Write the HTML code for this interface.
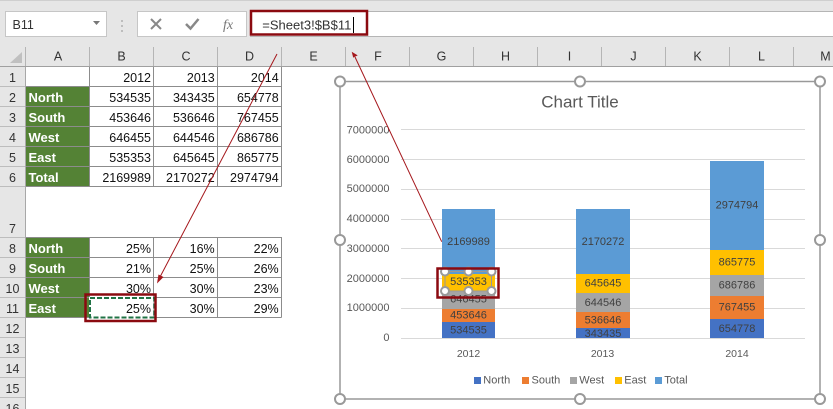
<!DOCTYPE html>
<html><head><meta charset="utf-8"><style>
html,body{margin:0;padding:0;background:#fff;width:833px;height:409px;overflow:hidden}
svg{display:block}
text{font-family:"Liberation Sans",sans-serif}
.c text{font-size:12.5px;fill:#111;text-anchor:end}
.h text{font-size:12.5px;fill:#333;text-anchor:middle}
.g text{font-size:13px;font-weight:bold;fill:#fff}
.a text{font-size:11px;fill:#595959;text-anchor:end}
.d text{font-size:11px;fill:#404040;text-anchor:middle}
.x text{font-size:10.5px;fill:#595959;text-anchor:middle}
.l text{font-size:11px;fill:#595959}
.hd circle{fill:#fff;stroke:#999;stroke-width:2}
</style></head><body>
<svg width="833" height="409" viewBox="0 0 833 409" xmlns="http://www.w3.org/2000/svg">
<rect width="833" height="409" fill="#fff"/>
<!-- top bars -->
<rect width="833" height="66" fill="#e6e6e6"/>
<rect width="833" height="1" fill="#cfcfcf"/>
<rect x="250" y="12" width="583" height="24" fill="#fff"/>
<rect x="250" y="11" width="583" height="1" fill="#b5b5b5"/>
<rect x="250" y="36" width="583" height="1" fill="#b5b5b5"/>
<rect x="5.5" y="11.5" width="101" height="25" fill="#fff" stroke="#c6c6c6"/>
<text x="12.5" y="29" font-size="12.5" fill="#333">B11</text>
<path d="M93 21h7l-3.500 4z" fill="#777"/>
<g fill="#bdbdbd"><rect x="121" y="20" width="2" height="2"/><rect x="121" y="25" width="2" height="2"/><rect x="121" y="30" width="2" height="2"/></g>
<rect x="137.500" y="11.500" width="109" height="25" fill="#fff" stroke="#c6c6c6"/>
<path d="M151 19l10 10M161 19l-10 10" stroke="#888" stroke-width="2" fill="none"/>
<path d="M186 24l4.500 4.500L198.500 19" stroke="#888" stroke-width="2.500" fill="none"/>
<text x="223" y="29" font-family="Liberation Serif" font-style="italic" font-size="14" fill="#777" style="font-family:'Liberation Serif',serif">fx</text>
<text x="262.300" y="29.300" font-size="13" fill="#333">=Sheet3!$B$11</text>
<rect x="353" y="17" width="1" height="16" fill="#000"/>
<rect x="251" y="11" width="116" height="23.500" fill="none" stroke="#8b0a10" stroke-width="2.500"/>

<!-- column headers -->
<path d="M25.500 47v19M89.500 47v19M153.500 47v19M217.500 47v19M281.500 47v19M345.500 47v19M409.500 47v19M473.500 47v19M537.500 47v19M601.500 47v19M665.500 47v19M729.500 47v19M793.500 47v19" stroke="#b5b5b5"/>
<rect y="66" width="833" height="1" fill="#a0a0a0"/>
<path d="M22 52v11H10z" fill="#c0c0c0"/>
<g class="h">
<text x="58" y="60.700">A</text><text x="121.500" y="60.700">B</text><text x="186" y="60.700">C</text><text x="249.500" y="60.700">D</text><text x="313.500" y="60.700">E</text><text x="378" y="60.700">F</text><text x="441.500" y="60.700">G</text><text x="505.500" y="60.700">H</text><text x="569.500" y="60.700">I</text><text x="633.500" y="60.700">J</text><text x="697.500" y="60.700">K</text><text x="761.500" y="60.700">L</text><text x="825.500" y="60.700">M</text>
</g>
<!-- row headers -->
<rect y="67" width="25.500" height="342" fill="#e6e6e6"/>
<rect x="25" y="67" width="1" height="342" fill="#a8a8a8"/>
<path d="M0 86.500h25M0 106.500h25M0 126.500h25M0 146.500h25M0 166.500h25M0 186.500h25M0 237.500h25M0 257.500h25M0 277.500h25M0 297.500h25M0 317.500h25M0 337.500h25M0 357.500h25M0 377.500h25M0 397.500h25" stroke="#bdbdbd"/>
<g class="h">
<text x="12.500" y="82">1</text><text x="12.500" y="102">2</text><text x="12.500" y="122">3</text><text x="12.500" y="142">4</text><text x="12.500" y="162">5</text><text x="12.500" y="182">6</text><text x="12.500" y="233">7</text><text x="12.500" y="253">8</text><text x="12.500" y="273">9</text><text x="12.500" y="293">10</text><text x="12.500" y="313">11</text><text x="12.500" y="333">12</text><text x="12.500" y="353">13</text><text x="12.500" y="373">14</text><text x="12.500" y="393">15</text><text x="12.500" y="413">16</text>
</g>
<!-- green cells -->
<g fill="#548235"><rect x="26" y="87" width="63" height="99"/><rect x="26" y="238" width="63" height="79"/></g>
<!-- grid -->
<path d="M89.500 67v119.500M153.500 67v119.500M217.500 67v119.500M281.500 67v119.500M89.500 237v80.500M153.500 237v80.500M217.500 237v80.500M281.500 237v80.500M26 86.500h255.500M26 106.500h255.500M26 126.500h255.500M26 146.500h255.500M26 166.500h255.500M26 186.500h255.500M26 237.500h255.500M26 257.500h255.500M26 277.500h255.500M26 297.500h255.500M26 317.500h255.500" stroke="#8c8c8c" fill="none"/>
<g class="g">
<text x="28.500" y="102">North</text><text x="28.500" y="122">South</text><text x="28.500" y="142">West</text><text x="28.500" y="162">East</text><text x="28.500" y="182">Total</text>
<text x="28.500" y="253">North</text><text x="28.500" y="273">South</text><text x="28.500" y="293">West</text><text x="28.500" y="313">East</text>
</g>
<g class="c">
<text x="151" y="82">2012</text><text x="214.700" y="82">2013</text><text x="278.700" y="82">2014</text>
<text x="151" y="102">534535</text><text x="214.700" y="102">343435</text><text x="278.700" y="102">654778</text>
<text x="151" y="122">453646</text><text x="214.700" y="122">536646</text><text x="278.700" y="122">767455</text>
<text x="151" y="142">646455</text><text x="214.700" y="142">644546</text><text x="278.700" y="142">686786</text>
<text x="151" y="162">535353</text><text x="214.700" y="162">645645</text><text x="278.700" y="162">865775</text>
<text x="151" y="182">2169989</text><text x="214.700" y="182">2170272</text><text x="278.700" y="182">2974794</text>
<text x="151" y="253">25%</text><text x="214.700" y="253">16%</text><text x="278.700" y="253">22%</text>
<text x="151" y="273">21%</text><text x="214.700" y="273">25%</text><text x="278.700" y="273">26%</text>
<text x="151" y="293">30%</text><text x="214.700" y="293">30%</text><text x="278.700" y="293">23%</text>
<text x="151" y="313">25%</text><text x="214.700" y="313">30%</text><text x="278.700" y="313">29%</text>
</g>
<!-- selected cell -->
<rect x="90" y="298" width="64.500" height="19.500" fill="none" stroke="#fff" stroke-width="2"/>
<rect x="90" y="298" width="64.500" height="19.500" fill="none" stroke="#217346" stroke-width="2" stroke-dasharray="5 2"/>
<rect x="85.500" y="294.500" width="70" height="26.500" fill="none" stroke="#8b0a10" stroke-width="2.500"/>

<!-- chart -->
<rect x="340" y="81.500" width="480" height="317.500" fill="#fff" stroke="#999" stroke-width="1.500"/>
<text x="580" y="107.700" font-size="17" fill="#595959" text-anchor="middle">Chart Title</text>
<path d="M401 129.500h404M401 159.500h404M401 189.500h404M401 219.500h404M401 248.500h404M401 278.500h404M401 308.500h404M401 338.500h404" stroke="#d9d9d9" stroke-width="1"/>
<g class="a">
<text x="389.500" y="133.300">7000000</text><text x="389.500" y="163">6000000</text><text x="389.500" y="192">5000000</text><text x="389.500" y="222">4000000</text><text x="389.500" y="252">3000000</text><text x="389.500" y="282">2000000</text><text x="389.500" y="311">1000000</text><text x="389.500" y="341">0</text>
</g>
<!-- bars -->
<rect x="442" y="209" width="53" height="66" fill="#5b9bd5"/>
<rect x="442" y="274" width="53" height="17" fill="#ffc000"/>
<rect x="442" y="291" width="53" height="18" fill="#a5a5a5"/>
<rect x="442" y="309" width="53" height="13" fill="#ed7d31"/>
<rect x="442" y="322" width="53" height="16" fill="#4472c4"/>

<rect x="576" y="209" width="54" height="65" fill="#5b9bd5"/>
<rect x="576" y="274" width="54" height="19" fill="#ffc000"/>
<rect x="576" y="293" width="54" height="19" fill="#a5a5a5"/>
<rect x="576" y="312" width="54" height="16" fill="#ed7d31"/>
<rect x="576" y="328" width="54" height="10" fill="#4472c4"/>

<rect x="710" y="161" width="54" height="89" fill="#5b9bd5"/>
<rect x="710" y="250" width="54" height="25" fill="#ffc000"/>
<rect x="710" y="275" width="54" height="21" fill="#a5a5a5"/>
<rect x="710" y="296" width="54" height="23" fill="#ed7d31"/>
<rect x="710" y="319" width="54" height="19" fill="#4472c4"/>
<g class="d">
<text x="468.500" y="245">2169989</text><text x="468.500" y="285">535353</text><text x="468.500" y="302.700">646455</text><text x="468.500" y="318.700">453646</text><text x="468.500" y="333.500">534535</text>
<text x="603" y="245">2170272</text><text x="603" y="286.700">645645</text><text x="603" y="306">644546</text><text x="603" y="323.700">536646</text><text x="603" y="337">343435</text>
<text x="737" y="208.700">2974794</text><text x="737" y="265.700">865775</text><text x="737" y="288.700">686786</text><text x="737" y="310.700">767455</text><text x="737" y="332">654778</text>
</g>
<g class="x"><text x="468.500" y="357">2012</text><text x="602.500" y="357">2013</text><text x="737" y="357">2014</text></g>
<rect x="474" y="377" width="7" height="7" fill="#4472c4"/><rect x="522" y="377" width="7" height="7" fill="#ed7d31"/><rect x="570" y="377" width="7" height="7" fill="#a5a5a5"/><rect x="615" y="377" width="7" height="7" fill="#ffc000"/><rect x="655" y="377" width="7" height="7" fill="#5b9bd5"/>
<g class="l"><text x="483.300" y="383.300">North</text><text x="531.500" y="383.300">South</text><text x="579.300" y="383.300">West</text><text x="624.300" y="383.300">East</text><text x="664.300" y="383.300">Total</text></g>
<!-- chart handles -->
<g class="hd">
<circle cx="340" cy="81.500" r="5"/><circle cx="580" cy="81.500" r="5"/><circle cx="820" cy="81.500" r="5"/>
<circle cx="340" cy="240" r="5"/><circle cx="820" cy="240" r="5"/>
<circle cx="340" cy="399" r="5"/><circle cx="580" cy="399" r="5"/><circle cx="820" cy="399" r="5"/>
</g>
<!-- label selection -->
<rect x="445" y="271.500" width="46.500" height="19.500" fill="none" stroke="#999" stroke-width="1"/>
<g class="hd" style="stroke-width:1.500">
<circle cx="445" cy="271.500" r="4"/><circle cx="468.500" cy="271.500" r="4"/><circle cx="491.500" cy="271.500" r="4"/>
<circle cx="445" cy="291" r="4"/><circle cx="468.500" cy="291" r="4"/><circle cx="491.500" cy="291" r="4"/>
</g>
<rect x="437.500" y="268.500" width="61" height="29" fill="none" stroke="#8b0a10" stroke-width="2.500"/>
<!-- arrows -->
<path d="M277 54L160 277M441.700 241.700L355 57" stroke="#a5171c" stroke-width="1" fill="none"/>
<path d="M157 283.500l1.500-9 5 2.500z" fill="#a5171c"/>
<path d="M351.700 51.700l6 3.700-4.500 2.200z" fill="#a5171c"/>
</svg>
</body></html>
